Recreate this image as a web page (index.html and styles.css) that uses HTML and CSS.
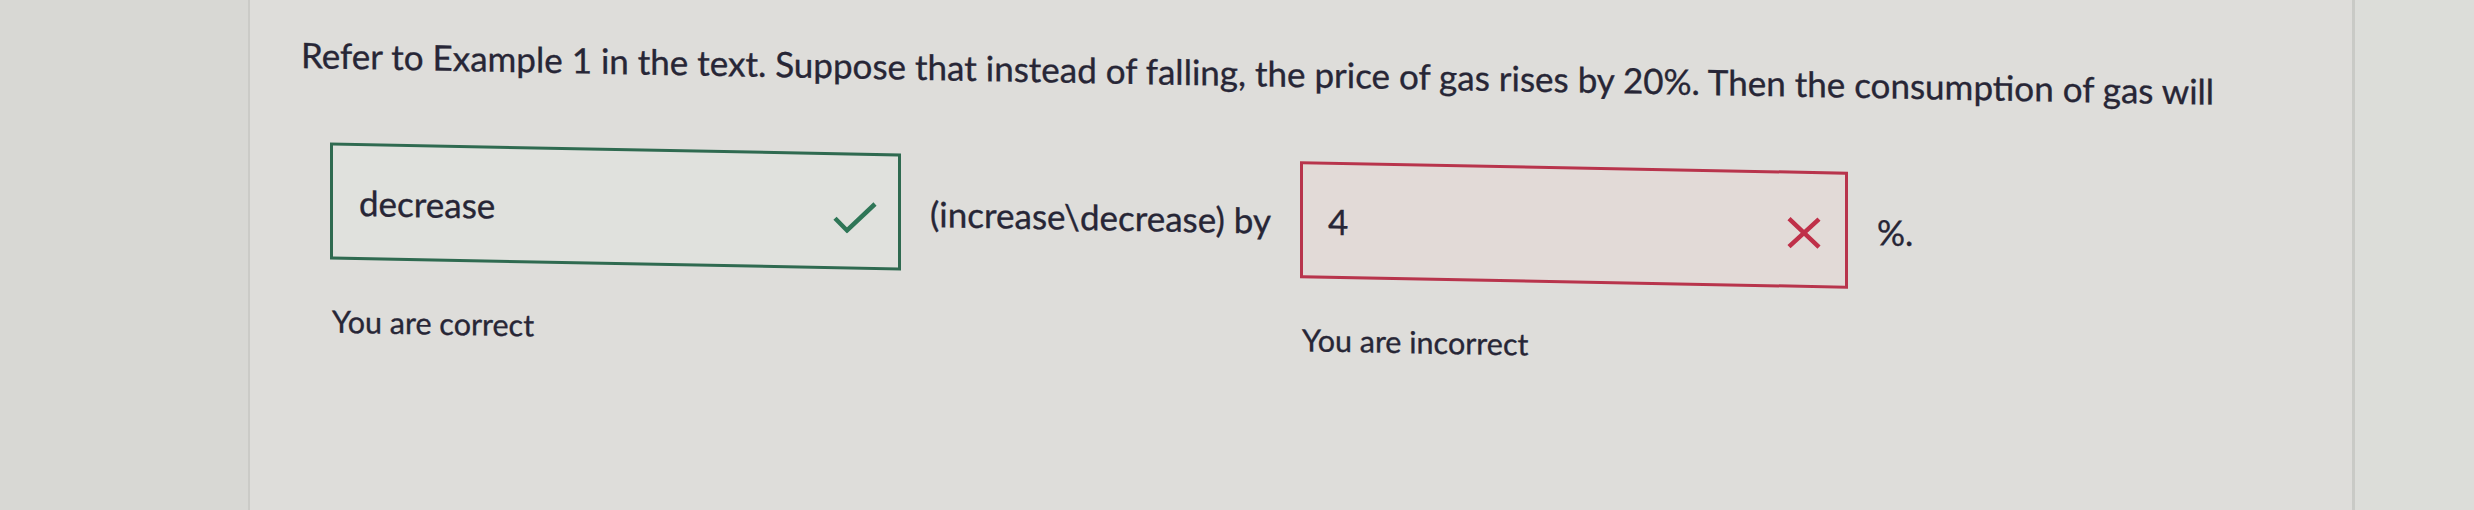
FILE: index.html
```html
<!DOCTYPE html>
<html lang="en">
<head>
<meta charset="utf-8">
<title>Question</title>
<link rel="stylesheet" href="styles.css">
</head>
<body>
<div class="screen">
  <aside class="side side-left"></aside>
  <main class="main">
    <div class="content">
      <p class="question">Refer to Example 1 in the text. Suppose that instead of falling, the price of gas rises by 20%. Then the consumption of gas will</p>
      <div class="answer-row">
        <div class="field">
          <div class="answer answer-correct">
            <span class="answer-text">decrease</span>
            <svg class="mark mark-check" viewBox="0 0 44 32" width="44" height="32" aria-hidden="true"><path d="M2 17 L14 29 L42 2" fill="none" stroke="#2f7657" stroke-width="4.5"/></svg>
          </div>
          <p class="feedback">You are correct</p>
        </div>
        <div class="label">(increase\decrease) by</div>
        <div class="field">
          <div class="answer answer-wrong">
            <span class="answer-text">4</span>
            <svg class="mark mark-cross" viewBox="0 0 34 32" width="34" height="32" aria-hidden="true"><path d="M2 2 L32 30 M32 2 L2 30" fill="none" stroke="#bf3049" stroke-width="4.5"/></svg>
          </div>
          <p class="feedback">You are incorrect</p>
        </div>
        <div class="label">%.</div>
      </div>
    </div>
  </main>
  <aside class="side side-right"></aside>
</div>
</body>
</html>
```
FILE: styles.css
```css
* { box-sizing: border-box; }
html, body { margin: 0; padding: 0; }
body {
  width: 2474px;
  height: 510px;
  overflow: hidden;
  background: #dddcd8;
  font-family: "Lato", "Liberation Sans", sans-serif;
  color: #272636;
  -webkit-text-stroke: 0.35px #272636;
}
.screen {
  display: flex;
  height: 510px;
}
.side-left {
  width: 250px;
  flex: none;
  background: #d8d8d4;
  border-right: 2px solid #cbcbc7;
}
.side-right {
  width: 122px;
  flex: none;
  background: #dcddd9;
  border-left: 3px solid #c9cac6;
}
.main {
  flex: 1;
  background: #dedddA;
}
.content {
  padding: 32px 0 0 51px;
  transform: skewY(1.1deg);
  transform-origin: 0 0;
}
.question {
  margin: 0;
  font-size: 35px;
  line-height: 1.2;
  white-space: nowrap;
}
.answer-row {
  display: flex;
  align-items: flex-start;
  gap: 29px;
  margin-top: 67px;
  padding-left: 29px;
}
.field {
  display: flex;
  flex-direction: column;
}
.answer {
  height: 117px;
  display: flex;
  align-items: center;
  justify-content: space-between;
  font-size: 35px;
  line-height: 1.2;
}
.answer-correct {
  width: 571px;
  border: 3px solid #2f6a50;
  background: #e0e1dd;
  padding: 0 21px 0 26px;
}
.answer-wrong {
  width: 548px;
  border: 3px solid #b8344c;
  background: #e2dad7;
  padding: 0 24px 0 25px;
}
.mark { display: block; flex: none; }
.mark-check { margin-top: 13px; }
.mark-cross { margin-top: 7px; }
.label {
  height: 117px;
  display: flex;
  align-items: center;
  font-size: 35px;
  line-height: 1.2;
  white-space: nowrap;
}
.feedback {
  margin: 43px 0 0 2px;
  font-size: 30.5px;
  line-height: 1.2;
}
```
